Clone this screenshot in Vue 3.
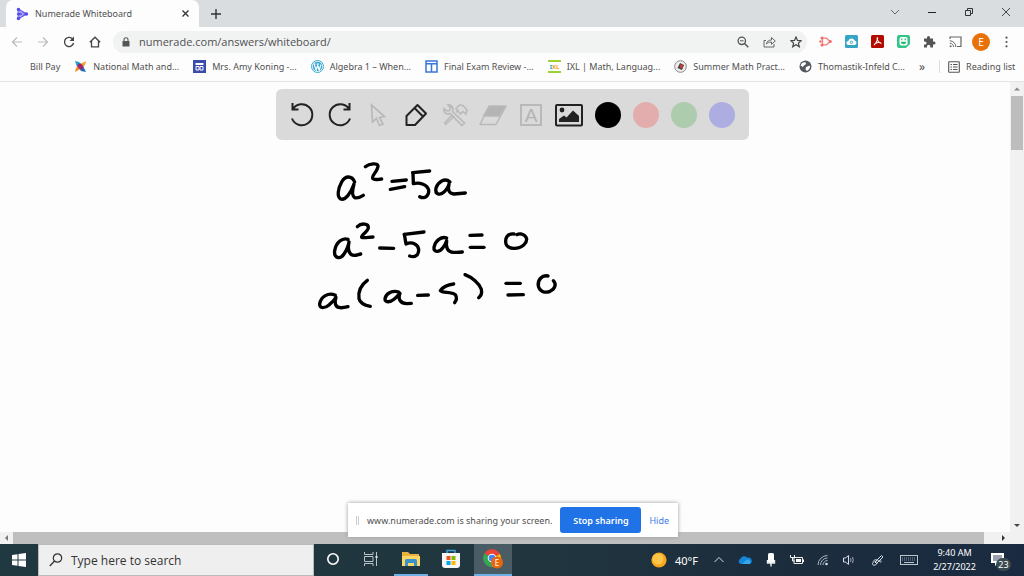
<script setup>
import { ref } from 'vue'

const query = ref('')
const address = ref('numerade.com/answers/whiteboard/')

const bookmarks = [
  { icon: 'math', label: 'National Math and...' },
  { icon: 'site', label: 'Mrs. Amy Koning -...' },
  { icon: 'wp', label: 'Algebra 1 – When...' },
  { icon: 'exam', label: 'Final Exam Review -...' },
  { icon: 'ixl', label: 'IXL | Math, Languag...' },
  { icon: 'summer', label: 'Summer Math Pract...' },
  { icon: 'globe', label: 'Thomastik-Infeld C...' },
]

const swatches = [
  { name: 'Black', cls: 'black' },
  { name: 'Red', cls: 'red' },
  { name: 'Green', cls: 'green' },
  { name: 'Blue', cls: 'blue' },
]

const strokes = [
  // first line
  'M134 96C126 76 106 76 95 96C84 116 80 140 92 147C106 152 122 130 132 102C126 124 126 138 134 143C142 146 152 141 160 136',
  'M166 50C178 40 204 38 204 48C204 62 184 78 188 85C194 92 206 87 215 87',
  'M246 94L289 90', 'M241 118L284 110',
  'M308 68L359 63', 'M309 68L310 101C330 96 352 104 356 120C358 138 344 148 329 140',
  'M420 96C404 82 384 96 378 114C374 132 388 138 402 126C410 118 416 108 417 102C412 122 418 130 432 132L466 129',
  // second line
  'M114 268C98 262 78 276 74 302C71 324 90 330 102 312C110 300 116 284 117 276C112 300 118 316 132 316C140 316 146 313 152 312',
  'M142 230C154 218 176 220 175 233C174 246 152 255 155 262C164 265 176 261 189 261',
  'M209 294L251 295',
  'M283 253L342 246', 'M283 253L288 282C306 274 324 282 326 298C327 316 314 324 299 318',
  'M410 264C394 258 376 272 372 292C370 308 388 308 398 294C404 286 408 278 410 272C406 294 414 306 430 307C442 308 450 307 457 306',
  'M480 256L516 255', 'M481 292L522 292',
  'M612 252C592 250 584 264 588 282C594 298 624 300 642 284C656 270 650 256 634 252C628 251 624 252 621 254',
  // third line
  'M76 436C56 426 32 440 29 462C28 476 44 476 58 464C68 456 74 448 78 442C72 458 76 472 90 473C98 474 106 472 114 470',
  'M172 391C154 404 144 424 147 446C150 460 164 466 181 469',
  'M266 426C248 420 228 430 225 446C224 458 240 458 252 448C262 440 266 434 270 430C262 450 274 460 290 461L304 460',
  'M323 436L355 435',
  'M431 402C414 404 398 412 391 422C398 430 424 424 436 434C442 444 439 452 434 458',
  'M465 374C486 382 508 400 514 418C517 430 512 438 506 443',
  'M588 400L631 400', 'M594 435L640 434',
  'M714 378C696 374 682 390 685 408C688 424 704 430 720 424C736 416 740 402 730 392',
]
</script>

<template>
  <div class="screen">
    <header class="tabstrip">
      <div class="tab">
        <svg class="favicon" viewBox="0 0 12 14" aria-hidden="true">
          <path d="M1 1L11.500 7L1 13Z" fill="#6a62ea" />
          <path d="M0 5H4.500M0 9H4.500M4 4.500L7 7L4 9.500" stroke="#e4e2ff" stroke-width=".8" fill="none" />
          <circle cx="2" cy="2.500" r="1.700" fill="#554bea" /><circle cx="2" cy="11.500" r="1.700" fill="#554bea" />
          <circle cx="2" cy="7" r="1.500" fill="#554bea" /><circle cx="10" cy="7" r="1.700" fill="#554bea" />
        </svg>
        <span class="tab-title">Numerade Whiteboard</span>
        <button class="plain" aria-label="Close tab">
          <svg width="7" height="7" viewBox="0 0 7 7"><path d="M.5 .5L6.500 6.500M6.500 .5L.5 6.500" stroke="#333" stroke-width="1.300" /></svg>
        </button>
      </div>
      <button class="plain new-tab" aria-label="New tab">
        <svg width="10" height="10" viewBox="0 0 10 10"><path d="M5 0V10M0 5H10" stroke="#333" stroke-width="1.400" /></svg>
      </button>
      <div class="window-buttons">
        <button class="plain" aria-label="Search tabs"><svg width="10" height="10" viewBox="0 0 10 10"><path d="M1 3L5 7L9 3" stroke="#666" fill="none" /></svg></button>
        <button class="plain" aria-label="Minimize"><svg width="10" height="10" viewBox="0 0 10 10"><path d="M1 5.500H9" stroke="#222" /></svg></button>
        <button class="plain" aria-label="Restore"><svg width="10" height="10" viewBox="0 0 10 10"><path d="M1.500 3.500H6.500V8.500H1.500ZM3.500 3V1.500H8.500V6.500H7" stroke="#333" fill="none" /></svg></button>
        <button class="plain" aria-label="Close window"><svg width="10" height="10" viewBox="0 0 10 10"><path d="M1 1L9 9M9 1L1 9" stroke="#444" fill="none" /></svg></button>
      </div>
    </header>

    <nav class="toolbar" aria-label="Navigation">
      <button class="plain" aria-label="Back"><svg width="12" height="12" viewBox="0 0 12 12"><path d="M11 6H1.500M6 1.500L1.500 6L6 10.500" stroke="#bbb" stroke-width="1.200" fill="none" /></svg></button>
      <button class="plain" aria-label="Forward"><svg width="12" height="12" viewBox="0 0 12 12"><path d="M1 6H10.500M6 1.500L10.500 6L6 10.500" stroke="#bbb" stroke-width="1.200" fill="none" /></svg></button>
      <button class="plain" aria-label="Reload"><svg width="12" height="12" viewBox="0 0 12 12"><path d="M10 3.500A4.600 4.600 0 1 0 10.600 7" stroke="#444" stroke-width="1.400" fill="none" /><path d="M11 .5V5H6.500Z" fill="#444" /></svg></button>
      <button class="plain" aria-label="Home"><svg width="12" height="12" viewBox="0 0 12 12"><path d="M.8 6.200L6 1.200L11.200 6.200M2.500 5V10.800H9.500V5" stroke="#444" stroke-width="1.300" fill="none" /></svg></button>
      <div class="omnibox">
        <svg width="8" height="10" viewBox="0 0 8 10" aria-hidden="true"><rect x=".5" y="4" width="7" height="5.500" rx=".6" fill="#555" /><path d="M2 4V2.700A2 2 0 0 1 6 2.700V4" stroke="#555" stroke-width="1.100" fill="none" /></svg>
        <input v-model="address" class="address" aria-label="Address">
        <button class="plain" aria-label="Zoom"><svg width="12" height="12" viewBox="0 0 12 12"><circle cx="4.800" cy="4.800" r="3.700" stroke="#555" stroke-width="1.300" fill="none" /><path d="M7.500 7.500L11.300 11.300" stroke="#555" stroke-width="1.500" /><path d="M3 4.800H6.600" stroke="#555" /></svg></button>
        <button class="plain" aria-label="Share"><svg width="13" height="12" viewBox="0 0 13 12"><path d="M3 4.500H1V11H11V8M3.500 8C4 5.200 5.800 4 8.500 4V1.500L12.300 5L8.500 8.300V6C6.300 6 4.800 6.500 3.500 8Z" stroke="#666" fill="none" /></svg></button>
        <button class="plain" aria-label="Bookmark"><svg width="12" height="12" viewBox="0 0 12 12"><path d="M6 1L7.500 4.400L11.200 4.700L8.400 7.100L9.300 10.800L6 8.800L2.700 10.800L3.600 7.100L.8 4.700L4.500 4.400Z" stroke="#444" stroke-width="1.200" fill="none" /></svg></button>
      </div>
      <div class="extensions">
        <button class="plain" aria-label="Recorder"><svg width="13" height="13" viewBox="0 0 13 13"><path d="M3.500 3.200H7.500L11 6.500L7.500 9.800H3.500Z" stroke="#f58080" stroke-width="1.300" fill="none" /><circle cx="3" cy="3" r="1.500" fill="#f36a6a" /><circle cx="3" cy="10" r="1.500" fill="#f36a6a" /><circle cx="11.300" cy="6.500" r="1.500" fill="#f36a6a" /><circle cx="1.500" cy="6.500" r="1.200" fill="#f36a6a" /></svg></button>
        <button class="plain" aria-label="Cloud"><svg width="13" height="13" viewBox="0 0 13 13"><rect width="13" height="13" rx="1.500" fill="#36a5c4" /><path d="M3.500 10A2 2 0 0 1 3.300 6A3.300 3.300 0 0 1 9.600 5.500A2.300 2.300 0 0 1 9.700 10Z" fill="#fff" /><circle cx="6.500" cy="7.300" r="1.200" fill="none" stroke="#36a5c4" /></svg></button>
        <button class="plain" aria-label="PDF"><svg width="13" height="13" viewBox="0 0 13 13"><rect width="13" height="13" rx="1.500" fill="#b30b00" /><path d="M6.200 2.500C7.400 3 6 7.300 3 10M6.200 2.500C5.200 4.500 8.300 8.500 10.500 8.500M4 8.600C6 7.500 8 7.200 10 7.800" stroke="#fff" stroke-width="1.100" fill="none" /></svg></button>
        <button class="plain" aria-label="Sticker"><svg width="13" height="13" viewBox="0 0 13 13"><path d="M2 0H11A2 2 0 0 1 13 2V9L9 13H2A2 2 0 0 1 0 11V2A2 2 0 0 1 2 0Z" fill="#35c487" /><rect x="2.500" y="2" width="8" height="8.500" rx="2" fill="#fff" /><path d="M4.800 3.500V5.200M8.200 3.500V5.200" stroke="#20ba74" stroke-width="1.200" /><path d="M4 6.800H9A2.500 2.500 0 0 1 4 6.800Z" fill="#20ba74" /></svg></button>
        <button class="plain" aria-label="Extensions"><svg width="13" height="13" viewBox="0 0 13 13"><path d="M1 3.500H4V2.500A1.500 1.500 0 0 1 7 2.500V3.500H10V6.500H11A1.500 1.500 0 0 1 11 9.500H10V12.500H7.300V11.500A1.600 1.600 0 0 0 4 11.500V12.500H1V9.500H2A1.500 1.500 0 0 0 2 6.500H1Z" fill="#555" /></svg></button>
        <button class="plain" aria-label="Cast"><svg width="13" height="12" viewBox="0 0 13 12"><path d="M1 3V1H12V10.500H8" stroke="#666" stroke-width="1.200" fill="none" /><path d="M.8 7.200A3.600 3.600 0 0 1 4.500 11M.8 4.800A6 6 0 0 1 6.800 11" stroke="#666" fill="none" /><circle cx="1.600" cy="10.200" r="1" fill="#666" /></svg></button>
        <button class="plain avatar" aria-label="Profile">E</button>
        <button class="plain" aria-label="Menu"><svg width="13" height="12" viewBox="0 0 13 12"><g fill="#555"><circle cx="6.500" cy="1.700" r="1.100" /><circle cx="6.500" cy="6" r="1.100" /><circle cx="6.500" cy="10.300" r="1.100" /></g></svg></button>
      </div>
    </nav>

    <nav class="bookmarks" aria-label="Bookmarks">
      <a href="#" class="bookmark first">Bill Pay</a>
      <a v-for="b in bookmarks" :key="b.label" href="#" class="bookmark">
        <svg width="13" height="13" viewBox="0 0 13 13" aria-hidden="true">
          <template v-if="b.icon === 'math'">
            <path d="M1 1L5 2L8 5L3 7Z" fill="#1ba0c8" /><path d="M12 1L11 5L7 8L5 5Z" fill="#f6a21b" /><path d="M12 12L7 11L5 8L9 6Z" fill="#1b6fb5" /><path d="M1 12L2 8L6 5L8 8Z" fill="#f08a24" /><path d="M4 4L7 3.500L9.500 6.500L8.500 9.500L5.500 9L3.500 6.500Z" fill="#a5246c" />
          </template>
          <template v-else-if="b.icon === 'site'">
            <rect width="13" height="13" fill="#3b4ba8" /><path d="M2.500 3H10.500V5H2.500Z" fill="#fff" /><path d="M3 6.500H6V10H3ZM7 6.500H10V10H7Z" fill="none" stroke="#fff" />
          </template>
          <template v-else-if="b.icon === 'wp'">
            <circle cx="6.500" cy="6.500" r="6" fill="#fff" stroke="#3ba8cf" /><circle cx="6.500" cy="6.500" r="4.800" fill="#35a8d0" /><path d="M3 4L5.200 10L6.700 5.500L8.200 10L10 4.500M2.500 4H4.500M5.500 4H8" stroke="#fff" stroke-width="1.200" fill="none" />
          </template>
          <template v-else-if="b.icon === 'exam'">
            <path d="M1 1H12V12H1ZM1 3.800H12M6.500 4V12" fill="none" stroke="#3975dc" stroke-width="1.500" />
          </template>
          <template v-else-if="b.icon === 'ixl'">
            <path d="M0 1H13M0 12H13" stroke="#9ed232" stroke-width="1.800" /><text x="6.500" y="9" text-anchor="middle" class="ixl"><tspan fill="#1b9fce">I</tspan><tspan fill="#f0a01a">XL</tspan></text>
          </template>
          <template v-else-if="b.icon === 'summer'">
            <circle cx="6.500" cy="6.500" r="5.800" fill="#eee" stroke="#888" /><path d="M6 3L10 5L8 10L3.500 8Z" fill="#444" /><path d="M6.500 4L9.500 5.500L8 8.500L5.500 7.500Z" fill="#c43b38" />
          </template>
          <template v-else>
            <circle cx="6.500" cy="6.500" r="6" fill="#555a60" /><path d="M3 3C5 2 7 2 7 3.500C7 5 4.500 5 4 7L1.500 5.500ZM7 7L11 5.500C11.500 8 10 10 8 11L6.500 9.500Z" fill="#fff" />
          </template>
        </svg>
        <span>{{ b.label }}</span>
      </a>
      <button class="plain more" aria-label="More bookmarks">»</button>
      <button class="plain reading">
        <svg width="12" height="12" viewBox="0 0 12 12" aria-hidden="true"><rect x=".7" y=".7" width="10.600" height="10.600" rx=".5" fill="none" stroke="#555" stroke-width="1.100" /><path d="M2.500 3.500H4M5 3.500H9.500M2.500 6H4M5 6H9.500M2.500 8.500H4M5 8.500H9.500" stroke="#555" /></svg>
        <span>Reading list</span>
      </button>
    </nav>

    <main class="viewport">
      <section class="board">
        <svg class="ink" width="260" height="170" viewBox="0 0 780 510" role="img" aria-label="Whiteboard ink">
          <path v-for="(d, i) in strokes" :key="i" :d="d" />
        </svg>
        <div class="tools" role="toolbar" aria-label="Drawing tools">
          <button class="plain" aria-label="Undo"><svg width="28" height="28" viewBox="0 0 28 28"><path d="M4.500 2V8.500H10.500M5 8A10.500 10.500 0 1 1 4 17.500" stroke="#222" stroke-width="2" fill="none" /></svg></button>
          <button class="plain" aria-label="Redo"><svg width="28" height="28" viewBox="0 0 28 28"><path d="M23.500 2V8.500H17.500M23 8A10.500 10.500 0 1 0 24 17.500" stroke="#222" stroke-width="2" fill="none" /></svg></button>
          <button class="plain" aria-label="Select"><svg width="28" height="28" viewBox="0 0 28 28"><path d="M7.500 4L20.500 15.500L15.500 16.500L19 23L15.500 24.500L12.500 17.500L8.500 21Z" stroke="#b9b9b9" stroke-width="1.700" fill="none" /></svg></button>
          <button class="plain" aria-label="Pen"><svg width="28" height="28" viewBox="0 0 28 28"><path d="M4.500 24V15L15.500 4L24 12.500L13 24ZM12.500 7L21 15.500" stroke="#222" stroke-width="2" stroke-linejoin="round" fill="none" /></svg></button>
          <button class="plain" aria-label="Shapes"><svg width="28" height="28" viewBox="0 0 28 28"><g stroke="#b9b9b9" stroke-width="1.600" fill="none"><path d="M7 4L9.500 6.500L8.500 9.500L5.500 10L3 7.500C2 11.500 5.500 14 9 12.500L21 24.500L23.500 22L11.500 10.500C13 6 10 3.500 7 4Z" /><path d="M13.500 15L4 24M11.500 13.500L3 22.500M15 11.500L17.500 9M15 7.500L18.500 4L22 4.500L26 9L25 13L22 10.500L19.500 13Z" /></g></svg></button>
          <button class="plain" aria-label="Eraser"><svg width="28" height="28" viewBox="0 0 28 28"><path d="M10 5H27L20.500 15H3.500Z" fill="#b4b4b4" /><path d="M10 5H27L17 23.500H1ZM5 15H21" stroke="#b9b9b9" stroke-width="1.500" stroke-linejoin="round" fill="none" /></svg></button>
          <button class="plain" aria-label="Text"><span class="letter">A</span></button>
          <button class="plain" aria-label="Image"><svg width="28" height="28" viewBox="0 0 28 28"><rect x="1" y="4" width="26" height="20.500" rx="1" stroke="#222" stroke-width="2" fill="none" /><circle cx="7" cy="9" r="2.400" fill="#222" /><path d="M4 21V18L9 14.500L11.500 16.500L18 9.500L24 15V21Z" fill="#222" /></svg></button>
          <button v-for="s in swatches" :key="s.name" class="plain swatch" :class="s.cls" :aria-label="s.name"></button>
        </div>
      </section>
      <div class="vbar" aria-hidden="true">
        <svg width="14" height="14" viewBox="0 0 14 14"><path d="M4 8.500L7 5.500L10 8.500Z" fill="#888" /></svg>
        <div class="vthumb"></div>
        <svg width="14" height="14" viewBox="0 0 14 14"><path d="M4 6L7 9L10 6Z" fill="#444" /></svg>
      </div>
      <div class="hbar" aria-hidden="true">
        <svg width="13" height="12" viewBox="0 0 13 12"><path d="M8 3L5 6L8 9Z" fill="#777" /></svg>
        <div class="hthumb"></div>
        <svg width="13" height="12" viewBox="0 0 13 12"><path d="M5 3L8 6L5 9Z" fill="#333" /></svg>
      </div>
      <aside class="sharing">
        <span class="grip"></span>
        <span class="share-text">www.numerade.com is sharing your screen.</span>
        <button class="stop">Stop sharing</button>
        <button class="plain hide">Hide</button>
      </aside>
    </main>

    <footer class="taskbar">
      <button class="plain start" aria-label="Start"><svg width="14" height="14" viewBox="0 0 14 14"><path d="M0 2L5.500 1.200V6.500H0ZM6.500 1L14 0V6.500H6.500ZM0 7.500H5.500V12.800L0 12ZM6.500 7.500H14V14L6.500 13Z" fill="#fff" /></svg></button>
      <label class="search">
        <svg width="14" height="14" viewBox="0 0 14 14" aria-hidden="true"><circle cx="8.500" cy="5" r="4.200" stroke="#333" stroke-width="1.200" fill="none" /><path d="M5.500 8L.8 13" stroke="#333" stroke-width="1.300" /></svg>
        <input v-model="query" placeholder="Type here to search" aria-label="Type here to search">
      </label>
      <div class="apps">
        <button class="plain" aria-label="Cortana"><svg width="14" height="14" viewBox="0 0 14 14"><circle cx="7" cy="7" r="5.200" stroke="#fff" stroke-width="1.600" fill="none" /></svg></button>
        <button class="plain" aria-label="Task view"><svg width="14" height="14" viewBox="0 0 14 14"><path d="M.5 0V2.500H9V0M.5 14V11.500H9V14M.5 4.500H9V9.500H.5ZM12.500 0V14" stroke="#b9c4c8" fill="none" /><path d="M11.500 4H13.500V6H11.500Z" fill="#e5eaec" /></svg></button>
        <button class="plain open" aria-label="File Explorer"><svg width="18" height="16" viewBox="0 0 18 16"><path d="M0 1H6L8 3H17V15H0Z" fill="#e9b33f" /><path d="M0 5H18V15H0Z" fill="#fcd667" /><path d="M3 15V9.500Q3 8 4.500 8H13.500Q15 8 15 9.500V15H12V12H6V15Z" fill="#3a92ca" /></svg></button>
        <button class="plain" aria-label="Microsoft Store"><svg width="20" height="20" viewBox="0 0 20 20"><path d="M6 5V1.500H14V5" stroke="#3ba6e0" stroke-width="1.400" fill="none" /><path d="M1 4H19V16Q19 19 16 19H4Q1 19 1 16Z" fill="#f5f6f7" /><path d="M5.500 7H9.500V11H5.500Z" fill="#f25022" /><path d="M10.500 7H14.500V11H10.500Z" fill="#7fba00" /><path d="M5.500 12H9.500V16H5.500Z" fill="#00a4ef" /><path d="M10.500 12H14.500V16H10.500Z" fill="#ffb900" /></svg></button>
        <button class="plain open active" aria-label="Chrome"><svg width="22" height="22" viewBox="0 0 22 22"><path d="M10 10L2.500 5.500A9 9 0 0 1 18 6Z" fill="#e84335" /><path d="M10 10L10 19A9 9 0 0 1 2.300 5.500Z" fill="#34a853" /><path d="M10 10L18 6A9 9 0 0 1 10 19Z" fill="#fbbc05" /><circle cx="10" cy="10" r="4.300" fill="#fff" /><circle cx="10" cy="10" r="3.300" fill="#4285f4" /><circle cx="15" cy="14.500" r="6" fill="#e8660c" /><text x="15" y="17.500" text-anchor="middle" class="badge-letter">E</text></svg></button>
      </div>
      <div class="tray">
        <button class="plain weather"><svg width="16" height="16" viewBox="0 0 16 16" aria-hidden="true"><circle cx="8" cy="8" r="7.600" fill="#f9a61c" /><circle cx="7" cy="7" r="5.500" fill="#fdc54a" /></svg><span>40°F</span></button>
        <button class="plain" aria-label="Hidden icons"><svg width="14" height="14" viewBox="0 0 14 14"><path d="M2.500 9L7 4.500L11.500 9" stroke="#dde" fill="none" /></svg></button>
        <button class="plain" aria-label="OneDrive"><svg width="14" height="14" viewBox="0 0 14 14"><path d="M3 11A2.700 2.700 0 0 1 2.500 5.800A4 4 0 0 1 9.500 4.800A3.200 3.200 0 0 1 11.500 11Z" fill="#1686d9" /><path d="M4 11L9 6.500A3 3 0 0 1 12 11Z" fill="#32a9ef" /></svg></button>
        <button class="plain" aria-label="Microphone"><svg width="14" height="14" viewBox="0 0 14 14"><rect x="4" y="0" width="6" height="10" rx="1.500" fill="#fff" /><path d="M3.500 7V10H10.500V7M7 10V13.500" stroke="#eee" stroke-width="1.400" fill="none" /></svg></button>
        <button class="plain" aria-label="Battery"><svg width="14" height="14" viewBox="0 0 14 14"><path d="M4 4.500H12.500V10.500H4Z" fill="none" stroke="#eee" /><path d="M6 6H11V9H6ZM13 6.500H14V9H13Z" fill="#fff" /><path d="M.5 2V4.500H4.500V2M2.500 4V8H5" stroke="#eee" fill="none" /></svg></button>
        <button class="plain" aria-label="Wi-Fi"><svg width="14" height="14" viewBox="0 0 14 14"><path d="M2 12A9.500 9.500 0 0 1 11.500 2.500M4.500 12A7 7 0 0 1 11.500 5M7 12A4.500 4.500 0 0 1 11.500 7.500" stroke="#aab4be" fill="none" /><circle cx="10.500" cy="11" r="1.300" fill="#dde" /></svg></button>
        <button class="plain" aria-label="Volume"><svg width="14" height="14" viewBox="0 0 14 14"><path d="M1.500 5H3.500L6.500 2.500V11.500L3.500 9H1.500Z" fill="none" stroke="#dde" /><path d="M8.500 5Q9.500 7 8.500 9M10.500 4Q12 7 10.500 10" stroke="#9aa8b4" fill="none" /></svg></button>
        <button class="plain wide" aria-label="Pen workspace"><svg width="14" height="14" viewBox="0 0 14 14"><path d="M4 9L10.500 2.500L12 4L5.500 10.500ZM2 8.500C4 5.500 7 7 8.500 8.500C10 10 11 8 9.500 7.500M3.500 8.500C0 10 1.500 13 4 12C6 11.500 7 9.500 5 8.500" stroke="#d5dde3" fill="none" /></svg></button>
        <button class="plain wide" aria-label="Keyboard"><svg width="18" height="14" viewBox="0 0 18 14"><rect x=".5" y="2.500" width="17" height="9" fill="none" stroke="#bcc6ce" /><path d="M2 5H16M2 7H16" stroke="#8d9ba8" stroke-dasharray="1 1" /><path d="M4 9.500H14" stroke="#bcc6ce" /></svg></button>
        <time class="clock"><span>9:40 AM</span><span>2/27/2022</span></time>
        <button class="plain notify" aria-label="Notifications"><svg width="14" height="14" viewBox="0 0 14 14"><path d="M0 0H13V10H7L4 13V10H0Z" fill="#fff" /><path d="M2 3H11M2 5H11M2 7H8" stroke="#34475a" /></svg><span class="count">23</span></button>
      </div>
    </footer>
  </div>
</template>

<style>
html, body { margin: 0; overflow: hidden; }
</style>

<style scoped>
* { box-sizing: border-box; }
.screen { display: flex; flex-direction: column; height: 100vh; background: #fdfdfd; color: #505050; font-family: "Noto Sans", "Open Sans", sans-serif; font-size: 9px; }
svg { display: block; flex: none; }
.plain { display: flex; align-items: center; justify-content: center; flex: none; padding: 0; border: 0; background: none; font: inherit; color: inherit; }
input { min-width: 0; border: 0; padding: 0; outline: 0; background: none; font: inherit; color: inherit; }

.tabstrip { display: flex; align-items: center; flex: none; height: 27px; background: #dadde0; }
.tab { display: flex; align-items: center; align-self: stretch; gap: 6px; width: 193px; margin-left: 6px; padding: 0 10px; border-radius: 7px 7px 0 0; background: #fdfdfd; }
.favicon { width: 13px; height: 14px; }
.tab-title { flex: 1; white-space: nowrap; }
.new-tab { margin-left: 12px; }
.window-buttons { display: flex; gap: 27px; margin: 0 13px 4px auto; }

.toolbar { display: flex; align-items: center; flex: none; gap: 14px; height: 29px; padding: 0 11px; }
.omnibox { display: flex; flex: 1; align-items: center; gap: 14px; height: 22px; margin-left: -2px; padding: 0 5px 0 9px; border-radius: 11px; background: #f1f3f3; }
.omnibox .address { flex: 1; margin-left: -5px; font-family: "Open Sans", "Noto Sans", sans-serif; font-size: 11px; }
.extensions { display: flex; align-items: center; gap: 13px; margin-left: -2px; }
.avatar { width: 18px; height: 18px; margin: 0 -3px; border-radius: 50%; background: #e8710a; color: #fff; font-size: 10px; }

.bookmarks { display: flex; align-items: center; flex: none; gap: 14px; height: 26px; padding: 0 11px 4px 30px; border-bottom: 1px solid #e4e4e4; white-space: nowrap; }
.bookmark { display: flex; align-items: center; gap: 6px; color: inherit; text-decoration: none; }
.ixl { font-size: 6px; font-weight: 700; }
.more { margin-left: auto; font-size: 12px; }
.reading { gap: 6px; padding-left: 8px; border-left: 1px solid #ddd; }

.viewport { position: relative; display: grid; flex: 1; grid-template-columns: 1fr 14px; grid-template-rows: 1fr 12px; min-height: 0; }
.board { position: relative; display: flex; align-items: flex-start; justify-content: center; padding: 7px 0 0 14px; }
.ink { position: absolute; left: 310px; top: 68px; overflow: visible; fill: none; stroke: #000; stroke-width: 10; stroke-linecap: round; stroke-linejoin: round; }
.tools { display: flex; align-items: center; justify-content: space-between; width: 473px; height: 51px; padding: 0 12px; border-radius: 6px; background: #dadada; }
.tools .plain { width: 28px; height: 28px; }
.tools .letter { width: 22px; height: 22px; border: 2px solid #b9b9b9; color: #b3b3b3; font: 19px/19px "Liberation Sans", sans-serif; }
.tools .swatch { width: 26px; height: 26px; margin: 0 1px; border-radius: 50%; }
.black { background: #000; }
.red { background: #e4adad; }
.green { background: #adcbad; }
.blue { background: #adade2; }
.vbar { display: flex; flex-direction: column; justify-content: space-between; background: #f1f1f1; }
.vthumb { height: 54px; margin: 0 1px auto; background: #bdbdbd; }
.hbar { display: flex; align-items: stretch; grid-column: 1 / -1; padding-right: 14px; background: #f1f1f1; }
.hthumb { flex: 1; margin-right: 13px; background: #bfbfbf; }

.sharing { position: absolute; left: 50%; bottom: 7px; display: flex; align-items: center; gap: 8px; width: 330px; height: 34px; margin-left: -164px; padding: 0 9px 0 8px; background: #fff; box-shadow: 0 0 4px #999; }
.grip { width: 5px; height: 9px; border: solid #ccc; border-width: 0 1px; }
.share-text { flex: 1; white-space: nowrap; }
.stop { flex: none; width: 81px; height: 26px; padding: 0; border: 0; border-radius: 3px; background: #1f73e6; color: #fff; font: 600 9px "Noto Sans", sans-serif; white-space: nowrap; }
.hide { color: #3b7ce8; }

.taskbar { display: flex; align-items: stretch; flex: none; height: 32px; background: linear-gradient(90deg, #20383f, #21363f 50%, #1c2d3d 75%, #1a2a40); color: #fff; }
.start { width: 38px; }
.search { display: flex; align-items: center; gap: 8px; width: 276px; padding: 0 10px; border: 1px solid #bbb; background: #efefef; color: #333; }
.search input { flex: 1; font-family: "Open Sans", "Noto Sans", sans-serif; font-size: 12px; }
.search input::placeholder { color: #333; opacity: 1; }
.apps { display: flex; }
.apps .plain { width: 38px; border-bottom: 2px solid transparent; }
.apps .open { margin: 0 4px; width: 34px; border-bottom-color: #6fb0e6; }
.apps .active { width: 38px; background: #4b5d64; }
.badge-letter { fill: #fff; font-size: 8px; }
.tray { display: flex; align-items: center; gap: 12px; margin-left: auto; padding-right: 19px; }
.tray .wide { width: 19px; }
.weather { gap: 8px; margin-right: 2px; font-size: 11px; }
.clock { display: flex; flex-direction: column; align-items: center; width: 49px; font-size: 9px; line-height: 14px; }
.notify { position: relative; }
.count { position: absolute; left: 5px; top: 5px; width: 15px; height: 13px; border-radius: 7px; background: #3b4950; font-size: 9px; line-height: 13px; }
</style>
